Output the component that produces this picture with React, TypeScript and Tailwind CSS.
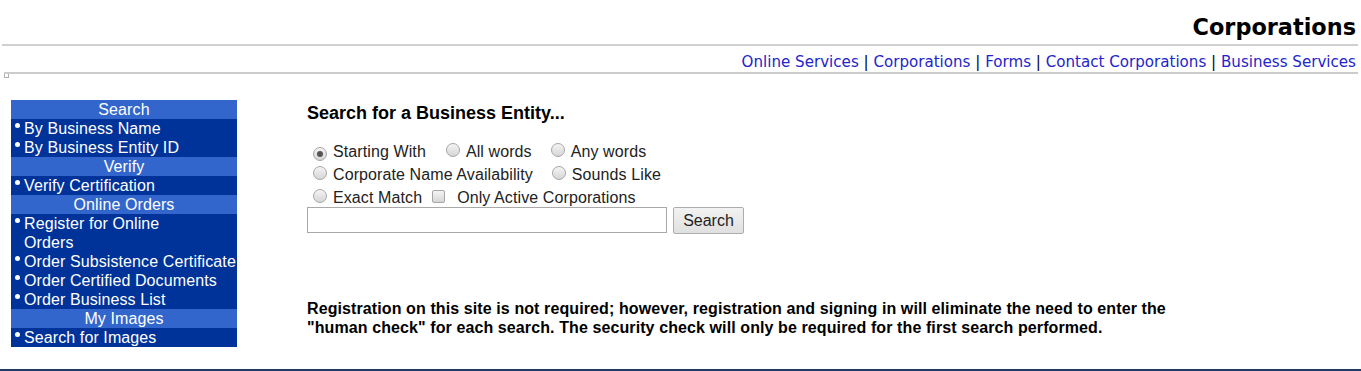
import React from "react";

const links = [
  "Online Services",
  "Corporations",
  "Forms",
  "Contact Corporations",
  "Business Services",
];

type MenuItem = { label: React.ReactNode; header?: boolean };

const menu: MenuItem[] = [
  { label: "Search", header: true },
  { label: "By Business Name" },
  { label: "By Business Entity ID" },
  { label: "Verify", header: true },
  { label: "Verify Certification" },
  { label: "Online Orders", header: true },
  {
    label: (
      <>
        Register for Online
        <br />
        Orders
      </>
    ),
  },
  { label: "Order Subsistence Certificate" },
  { label: "Order Certified Documents" },
  { label: "Order Business List" },
  { label: "My Images", header: true },
  { label: "Search for Images" },
];

function Radio({ checked }: { checked?: boolean }) {
  return (
    <span className="inline-flex w-[14px] h-[14px] shrink-0 items-center justify-center rounded-full border border-[#a6a6a6] bg-gradient-to-b from-[#f4f4f4] to-[#d6d6d6]">
      {checked && <span className="w-[6px] h-[6px] rounded-full bg-[#555]" />}
    </span>
  );
}

function Checkbox() {
  return (
    <span className="inline-block w-[13px] h-[13px] shrink-0 rounded-[2px] border border-[#a6a6a6] bg-gradient-to-b from-[#f4f4f4] to-[#d6d6d6]" />
  );
}

export default function App() {
  return (
    <div className="w-[1361px] h-[371px] bg-white overflow-hidden font-['Liberation_Sans',Arial,sans-serif]">
      {/* header */}
      <div className="pt-[14px] pr-[5px] text-right text-[22.4px] leading-[26px] font-bold text-black font-['DejaVu_Sans',Verdana,sans-serif]">
        Corporations
      </div>
      <div className="ml-[2px] mr-[3px] mt-[4px] h-[2px] bg-[#d0d0d0]" />
      <div className="mt-[7px] pr-[5px] text-right text-[15.1px] leading-[18px] font-['DejaVu_Sans',Verdana,sans-serif]">
        {links.map((l, i) => (
          <span key={l}>
            {i > 0 && <span className="text-[#000033]"> | </span>}
            <a className="text-[#2424cc]">{l}</a>
          </span>
        ))}
      </div>
      <div className="ml-[4px] mr-[3px] mt-[1px] h-[2px] bg-[#cccccc]" />
      <div className="ml-[4px] w-[5px] h-[4px] border border-t-0 border-[#b0b0b0]" />

      {/* body */}
      <div className="flex mt-[22px] h-[269px]">
        <div className="ml-[11px] w-[226px] self-start text-[16px] leading-[19px] tracking-[0.1px] text-white">
          {menu.map((m, i) =>
            m.header ? (
              <div key={i} className="bg-[#3366cc] text-center">
                {m.label}
              </div>
            ) : (
              <div key={i} className="flex bg-[#003399] whitespace-nowrap">
                <span className="w-[13px] shrink-0 pt-[4px] pl-[4px]">
                  <span className="block w-[5px] h-[5px] rounded-full bg-white" />
                </span>
                <span>{m.label}</span>
              </div>
            ),
          )}
        </div>

        <div className="ml-[70px] text-[#222]">
          <h2 className="mt-[2px] text-[18px] leading-[22px] font-bold text-black">
            Search for a Business Entity...
          </h2>
          <div className="mt-[16px] text-[16px] leading-[23px] tracking-[0.1px]">
            <div className="flex items-center">
              <span className="ml-[6px]"><Radio checked /></span>
              <span className="ml-[6px]">Starting With</span>
              <span className="ml-[20px]"><Radio /></span>
              <span className="ml-[6px]">All words</span>
              <span className="ml-[19px]"><Radio /></span>
              <span className="ml-[6px]">Any words</span>
            </div>
            <div className="flex items-center">
              <span className="ml-[6px]"><Radio /></span>
              <span className="ml-[6px]">Corporate Name Availability</span>
              <span className="ml-[19px]"><Radio /></span>
              <span className="ml-[6px]">Sounds Like</span>
            </div>
            <div className="flex items-center">
              <span className="ml-[6px]"><Radio /></span>
              <span className="ml-[6px]">Exact Match</span>
              <span className="ml-[10px]"><Checkbox /></span>
              <span className="ml-[12px]">Only Active Corporations</span>
            </div>
          </div>
          <div className="flex items-start mt-[-2px]">
            <input
              type="text"
              className="w-[360px] h-[26px] border border-[#a9a9a9] px-1 text-[16px] outline-none"
            />
            <button className="ml-[6px] w-[71px] h-[27px] border border-[#adadad] bg-gradient-to-b from-[#f2f2f2] to-[#e0e0e0] text-[16px] text-[#222] rounded-[2px]">
              Search
            </button>
          </div>
          <p className="mt-[65px] text-[16px] leading-[19px] tracking-[0.1px] font-bold text-black whitespace-nowrap">
            Registration on this site is not required; however, registration and signing in will eliminate the need to enter the
            <br />
            "human check" for each search. The security check will only be required for the first search performed.
          </p>
        </div>
      </div>
      <div className="h-[2px] bg-[#1f3c64]" />
    </div>
  );
}
